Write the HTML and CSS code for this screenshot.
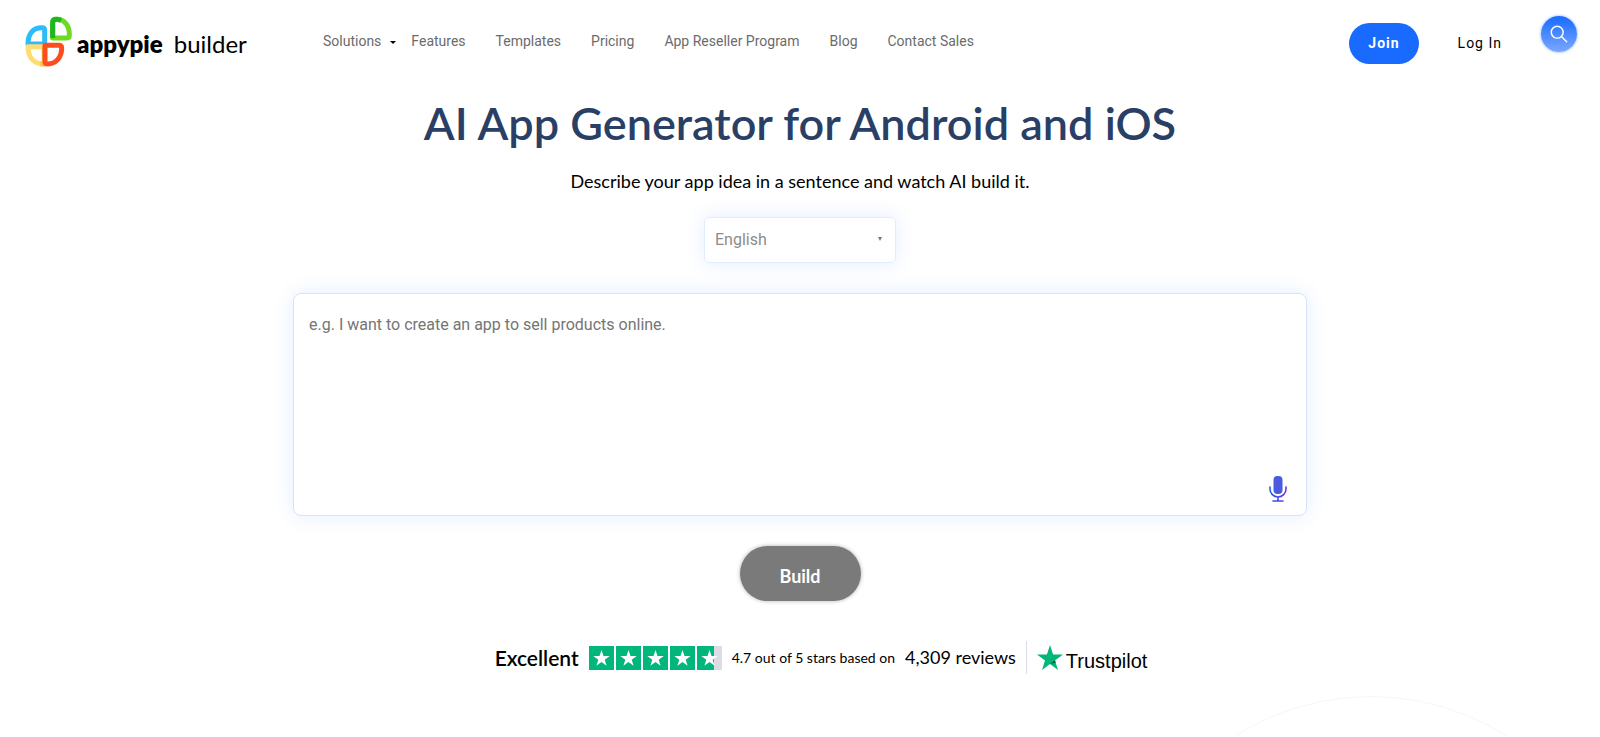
FILE: index.html
```html
<!DOCTYPE html>
<html lang="en">
<head>
    <meta charset="UTF-8">
    <meta name="viewport" content="width=device-width, initial-scale=1.0">
    <title>AI App Generator for Android and iOS</title>
    <link rel="stylesheet" href="styles.css">
</head>
<body>

<header class="header">
    <a class="logo" href="#">
        <svg class="logo-mark" viewBox="0 0 144 153" fill="none" stroke-width="15" stroke-linejoin="round" aria-hidden="true">
            <path stroke="#2cbcfb" d="M59 84V42Q59 35 51 35C22 35 9 55 9 84Z"/>
            <path stroke="#6fda22" d="M83 66V20Q83 10 94 10C120 10 133 30 133 55V58Q133 66 125 66Z"/>
            <path stroke="#1fb71f" d="M83 66V20Q83 10 94 10Q101 10 108 13"/>
            <path stroke="#ffdc73" d="M9 92H58V144C28 144 9 126 9 92Z"/>
            <path stroke="#ffc04a" d="M58 92V144H46"/>
            <path stroke="#fc4d1c" d="M60 88H102Q110 88 110 97C110 125 92 144 68 144Q60 144 60 136Z"/>
        </svg>
        <span class="logo-name">appypie</span>
        <span class="logo-product">builder</span>
    </a>

    <nav class="nav">
        <a class="has-menu" href="#">Solutions</a>
        <a href="#">Features</a>
        <a href="#">Templates</a>
        <a href="#">Pricing</a>
        <a href="#">App Reseller Program</a>
        <a href="#">Blog</a>
        <a href="#">Contact Sales</a>
    </nav>

    <div class="account">
        <a class="join" href="#">Join</a>
        <a class="login" href="#">Log In</a>
        <button class="search" type="button" aria-label="Search">
            <svg viewBox="0 0 20 20" fill="none" stroke="#fff" stroke-width="1.6" stroke-linecap="round">
                <circle cx="8" cy="8" r="6.6"/>
                <path d="M13 13l5.5 5.5"/>
            </svg>
        </button>
    </div>
</header>

<main class="main">
    <h1>AI App Generator for Android and iOS</h1>
    <p class="subtitle">Describe your app idea in a sentence and watch AI build it.</p>

    <form class="builder">
        <div class="language">
            <select aria-label="Language">
                <option>English</option>
            </select>
        </div>

        <div class="prompt">
            <textarea aria-label="App idea" placeholder="e.g. I want to create an app to sell products online."></textarea>
            <button class="mic" type="button" aria-label="Speak">
                <svg viewBox="0 0 18 26" fill="none">
                    <defs>
                        <linearGradient id="mic-line" gradientUnits="userSpaceOnUse" x1="0" x2="18" y1="0" y2="0">
                            <stop offset="0" stop-color="#1565e0"/>
                            <stop offset="1" stop-color="#7a2be0"/>
                        </linearGradient>
                    </defs>
                    <rect x="4.5" y="0" width="9" height="18" rx="4" fill="#4a5be0"/>
                    <path d="M1 11v2a8 8 0 0 0 16 0v-2M9 21v4M4 25h10" stroke="url(#mic-line)" stroke-width="1.6" stroke-linecap="round"/>
                </svg>
            </button>
        </div>

        <button class="build" type="button">Build</button>
    </form>

    <div class="rating">
        <strong>Excellent</strong>
        <svg class="stars" viewBox="0 0 133 24" role="img" aria-label="4.7 stars">
            <defs>
                <path id="star" d="M12.5 4l2 6h6.2l-5 3.7 1.9 6-5.1-3.7-5.1 3.7 1.9-6-5-3.7h6.2z" fill="#fff"/>
            </defs>
            <path fill="#00b67a" d="M0 0h25v24H0zM27 0h25v24H27zM54 0h25v24H54zM81 0h25v24H81zM108 0h17v24h-17z"/>
            <path fill="#dcdce6" d="M125 0h8v24h-8z"/>
            <use href="#star"/>
            <use href="#star" x="27"/>
            <use href="#star" x="54"/>
            <use href="#star" x="81"/>
            <use href="#star" x="108"/>
        </svg>
        <span class="score">4.7 out of 5 stars based on</span>
        <a class="reviews" href="#">4,309 reviews</a>
        <a class="trustpilot" href="#">
            <svg viewBox="0 0 26 25" aria-hidden="true">
                <path fill="#00b67a" d="M13 0l3.1 9.5H26l-8 5.9 3 9.6-8-6-8 6 3-9.6-8-5.9h9.9z"/>
                <path fill="#005128" d="M18.7 17.5l-.7-2.1-5 3.6z"/>
            </svg>
            <span>Trustpilot</span>
        </a>
    </div>
</main>

<div class="backdrop">
    <div class="ring"></div>
</div>

</body>
</html>
```

FILE: styles.css
```css
* {
    box-sizing: border-box;
}
body {
    margin: 0;
    height: 100vh;
    display: flex;
    flex-direction: column;
    font-family: Lato, "Open Sans", sans-serif;
    background-color: #fff;
    color: #000;
}
a {
    color: inherit;
    text-decoration: none;
}
button {
    font-family: inherit;
    border: none;
    cursor: pointer;
}
svg {
    display: block;
}
.header {
    display: flex;
    align-items: flex-start;
    padding: 16px 23px 0 25px;
}
.logo {
    display: flex;
    align-items: center;
    width: 298px;
    font-size: 24px;
    line-height: 32px;
}
.logo-mark {
    width: 48px;
    height: 51px;
    margin-right: 4px;
}
.logo-name {
    font-weight: 800;
    margin-right: 11px;
    padding-top: 5px;
}
.logo-product {
    padding-top: 5px;
}
.nav {
    display: flex;
    gap: 30px;
    padding-top: 14px;
    font-family: Roboto, sans-serif;
    font-size: 14px;
    line-height: 22px;
    color: #6b6b6b;
}
.has-menu::after {
    content: "";
    display: inline-block;
    margin-left: 9px;
    margin-right: -16px;
    vertical-align: middle;
    border: 3px solid transparent;
    border-top-color: #000;
    border-bottom: none;
}
.account {
    display: flex;
    align-items: flex-start;
    margin-left: auto;
    font-family: Roboto, sans-serif;
    font-size: 14px;
    letter-spacing: 1px;
}
.join {
    margin-top: 7px;
    padding: 0 19px;
    border-radius: 21px;
    background-color: #196aff;
    color: #fff;
    font-weight: 700;
    line-height: 41px;
}
.login {
    margin: 7px 39px 0;
    line-height: 41px;
}
.search {
    display: flex;
    align-items: center;
    justify-content: center;
    width: 36px;
    height: 36px;
    padding: 0;
    border-radius: 50%;
    background: linear-gradient(#196aff, #7aa8ff);
    box-shadow: 0 0 3px #7aa8ff;
}
.search svg {
    width: 18px;
    height: 18px;
}
.main {
    display: flex;
    flex-direction: column;
    align-items: center;
    padding: 28px 20px 0;
}
h1 {
    margin: 0;
    font-size: 45px;
    line-height: 56px;
    font-weight: 600;
    color: #2a3f66;
    text-align: center;
}
.subtitle {
    margin: 17px 0 22px;
    font-size: 18px;
    line-height: 27px;
}
.builder {
    display: flex;
    flex-direction: column;
    align-items: center;
    width: 100%;
}
.language {
    position: relative;
    width: 192px;
    margin-bottom: 30px;
}
.language::after {
    content: "";
    position: absolute;
    right: 14px;
    top: 20px;
    border: 2px solid transparent;
    border-top: 4px solid #777;
    border-bottom: none;
    pointer-events: none;
}
.language select {
    display: block;
    appearance: none;
    width: 100%;
    height: 46px;
    padding: 0 10px 2px;
    border: 1px solid #e3ecff;
    border-radius: 5px;
    background-color: #fff;
    box-shadow: 0 0 20px rgba(25, 106, 255, 0.12);
    font-family: Roboto, sans-serif;
    font-size: 16px;
    color: #8c8c8c;
}
.prompt {
    position: relative;
    width: 65%;
    margin-bottom: 30px;
}
.prompt textarea {
    display: block;
    width: 100%;
    height: 223px;
    padding: 19px 15px;
    border: 1px solid #d5e4f8;
    border-radius: 8px;
    box-shadow: 0 0 20px rgba(25, 106, 255, 0.12);
    font-family: Roboto, sans-serif;
    font-size: 16px;
    line-height: 24px;
    resize: none;
}
.prompt textarea::placeholder {
    color: #757575;
}
.mic {
    position: absolute;
    right: 20px;
    bottom: 14px;
    padding: 0;
    background: none;
}
.mic svg {
    width: 18px;
    height: 26px;
}
.build {
    width: 121px;
    height: 55px;
    padding: 4px 0 0;
    border-radius: 28px;
    background-color: #7a7a7a;
    box-shadow: 0 0 4px rgba(0, 0, 0, 0.3);
    color: #fff;
    font-size: 18px;
    font-weight: 700;
}
.rating {
    display: flex;
    align-items: center;
    gap: 10px;
    margin-top: 40px;
    padding-left: 42px;
    line-height: 33px;
}
.rating strong {
    font-size: 21px;
    font-weight: 600;
}
.stars {
    width: 133px;
    height: 24px;
}
.score {
    font-size: 14px;
}
.reviews {
    font-size: 18px;
}
.trustpilot {
    display: flex;
    align-items: center;
    gap: 3px;
    padding-left: 10px;
    border-left: 1px solid #dcdce6;
    font-family: "Liberation Sans", Arial, sans-serif;
    font-size: 20px;
}
.trustpilot svg {
    width: 26px;
    height: 25px;
}
.trustpilot span {
    padding-top: 8px;
    line-height: 25px;
}
.backdrop {
    flex: 1;
    min-height: 0;
    overflow: hidden;
    padding-top: 22px;
}
.ring {
    width: 506px;
    height: 506px;
    margin-left: auto;
    margin-right: -24px;
    border: 1px solid #f5f5fe;
    border-radius: 50%;
}
```
